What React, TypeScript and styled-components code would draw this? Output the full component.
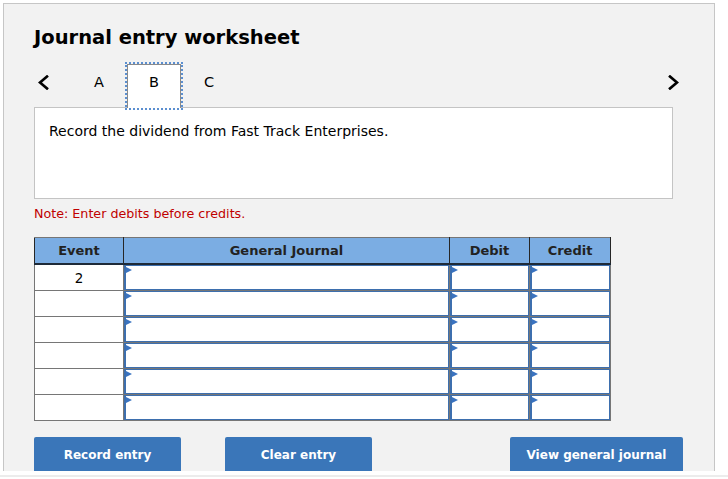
import React from "react";
import styled, { createGlobalStyle } from "styled-components";

const GlobalStyle = createGlobalStyle`
  html, body {
    margin: 0;
    padding: 0;
    background: #ffffff;
  }
  body {
    font-family: "DejaVu Sans", Verdana, sans-serif;
    color: #000;
  }
`;

const Panel = styled.div`
  margin: 3px 0 0 3px;
  width: 712px;
  height: 468px;
  box-sizing: border-box;
  border: 1px solid #c6c6c6;
  border-bottom: none;
  background: #f2f2f2;
  padding: 22px 30px 0 30px;
  overflow: hidden;
`;

const Title = styled.h1`
  margin: 0;
  font-size: 19.5px;
  line-height: 24px;
  font-weight: bold;
  color: #000;
`;

const TabRow = styled.div`
  display: flex;
  align-items: stretch;
  height: 44px;
  margin-top: 14px;
  margin-bottom: -1px;
  width: 649px;
`;

const NavButton = styled.button<{ $right?: boolean }>`
  border: none;
  background: transparent;
  padding: 0 0 8px 0;
  width: 38px;
  display: flex;
  align-items: center;
  justify-content: ${(p) => (p.$right ? "flex-end" : "flex-start")};
  margin-left: ${(p) => (p.$right ? "auto" : "0")};
  padding-left: ${(p) => (p.$right ? "0" : "3px")};
  padding-right: ${(p) => (p.$right ? "3px" : "0")};
  cursor: pointer;
`;

const Tab = styled.div<{ $active?: boolean }>`
  position: relative;
  z-index: 1;
  width: 54px;
  box-sizing: border-box;
  display: flex;
  align-items: center;
  justify-content: center;
  font-size: 14.5px;
  color: #000;
  padding-bottom: 9px;
  background: ${(p) => (p.$active ? "#ffffff" : "transparent")};
  border: 1px solid ${(p) => (p.$active ? "#8a8a8a" : "transparent")};
  border-bottom: none;
  outline: ${(p) => (p.$active ? "2px dotted #5b8fd0" : "none")};
  outline-offset: 0px;
  margin-left: ${(p) => (p.$active ? "1px" : "0")};
  margin-right: ${(p) => (p.$active ? "1px" : "0")};
`;

const Instruction = styled.div`
  width: 639px;
  height: 92px;
  box-sizing: border-box;
  background: #ffffff;
  border: 1px solid #c4c4c4;
  padding: 15px 14px;
  font-size: 14px;
  line-height: 16px;
`;

const Note = styled.div`
  margin-top: 7px;
  font-size: 12.7px;
  line-height: 15px;
  color: #c00000;
`;

const Table = styled.table`
  margin-top: 16px;
  border-collapse: collapse;
  table-layout: fixed;
  width: 577px;
  border: 1px solid #767676;
`;

const HeadCell = styled.th<{ $w: number }>`
  width: ${(p) => p.$w}px;
  height: 25px;
  padding: 0;
  background: #7badE3;
  border: 1px solid #262626;
  border-top-color: #767676;
  border-bottom: 2px solid #1e2a38;
  font-size: 13px;
  font-weight: bold;
  color: #222;
  text-align: center;
`;

const Cell = styled.td`
  height: 25px;
  padding: 0;
  border: 1px solid #767676;
  background: #ffffff;
  font-size: 13.5px;
  text-align: center;
  vertical-align: middle;
`;

const InputCell = styled.td`
  height: 25px;
  padding: 0;
  border: 1px solid #767676;
  background: #ffffff;
  vertical-align: top;
`;

const InputBox = styled.div`
  position: relative;
  height: 25px;
  box-sizing: border-box;
  border: 1px solid #3d6fae;
  border-left-width: 2px;
  background: #ffffff;

  &::before {
    content: "";
    position: absolute;
    top: 1px;
    left: 0;
    width: 0;
    height: 0;
    border-top: 3px solid transparent;
    border-bottom: 3px solid transparent;
    border-left: 6px solid #3a73c0;
  }
`;

const ButtonRow = styled.div`
  display: flex;
  margin-top: 16px;
  width: 649px;
`;

const ActionButton = styled.button<{ $w: number; $gap?: number; $push?: boolean }>`
  width: ${(p) => p.$w}px;
  height: 36px;
  flex: none;
  border: none;
  border-radius: 2px;
  background: #3a76b9;
  color: #ffffff;
  font-family: "DejaVu Sans", Verdana, sans-serif;
  font-size: 12px;
  font-weight: bold;
  cursor: pointer;
  margin-left: ${(p) => (p.$push ? "auto" : `${p.$gap ?? 0}px`)};
`;

const BottomStrip = styled.div`
  margin-top: 4px;
  height: 2px;
  background: #ececec;
`;

const Chevron = ({ dir }: { dir: "left" | "right" }) => (
  <svg width="12" height="15" viewBox="0 0 12 15">
    <polyline
      points={dir === "left" ? "10,1.5 3,7.5 10,13.5" : "2,1.5 9,7.5 2,13.5"}
      fill="none"
      stroke="#000"
      strokeWidth="2.6"
      strokeLinecap="square"
    />
  </svg>
);

const rows = ["2", "", "", "", "", ""];

export default function App() {
  return (
    <>
      <GlobalStyle />
      <Panel>
        <Title>Journal entry worksheet</Title>
        <TabRow>
          <NavButton aria-label="previous">
            <Chevron dir="left" />
          </NavButton>
          <Tab>A</Tab>
          <Tab $active>B</Tab>
          <Tab>C</Tab>
          <NavButton $right aria-label="next">
            <Chevron dir="right" />
          </NavButton>
        </TabRow>
        <Instruction>Record the dividend from Fast Track Enterprises.</Instruction>
        <Note>Note: Enter debits before credits.</Note>
        <Table>
          <thead>
            <tr>
              <HeadCell $w={88}>Event</HeadCell>
              <HeadCell $w={325}>General Journal</HeadCell>
              <HeadCell $w={79}>Debit</HeadCell>
              <HeadCell $w={80}>Credit</HeadCell>
            </tr>
          </thead>
          <tbody>
            {rows.map((ev, i) => (
              <tr key={i}>
                <Cell>{ev}</Cell>
                <InputCell>
                  <InputBox />
                </InputCell>
                <InputCell>
                  <InputBox />
                </InputCell>
                <InputCell>
                  <InputBox />
                </InputCell>
              </tr>
            ))}
          </tbody>
        </Table>
        <ButtonRow>
          <ActionButton $w={147}>Record entry</ActionButton>
          <ActionButton $w={147} $gap={44}>
            Clear entry
          </ActionButton>
          <ActionButton $w={173} $push>
            View general journal
          </ActionButton>
        </ButtonRow>
      </Panel>
      <BottomStrip />
    </>
  );
}
